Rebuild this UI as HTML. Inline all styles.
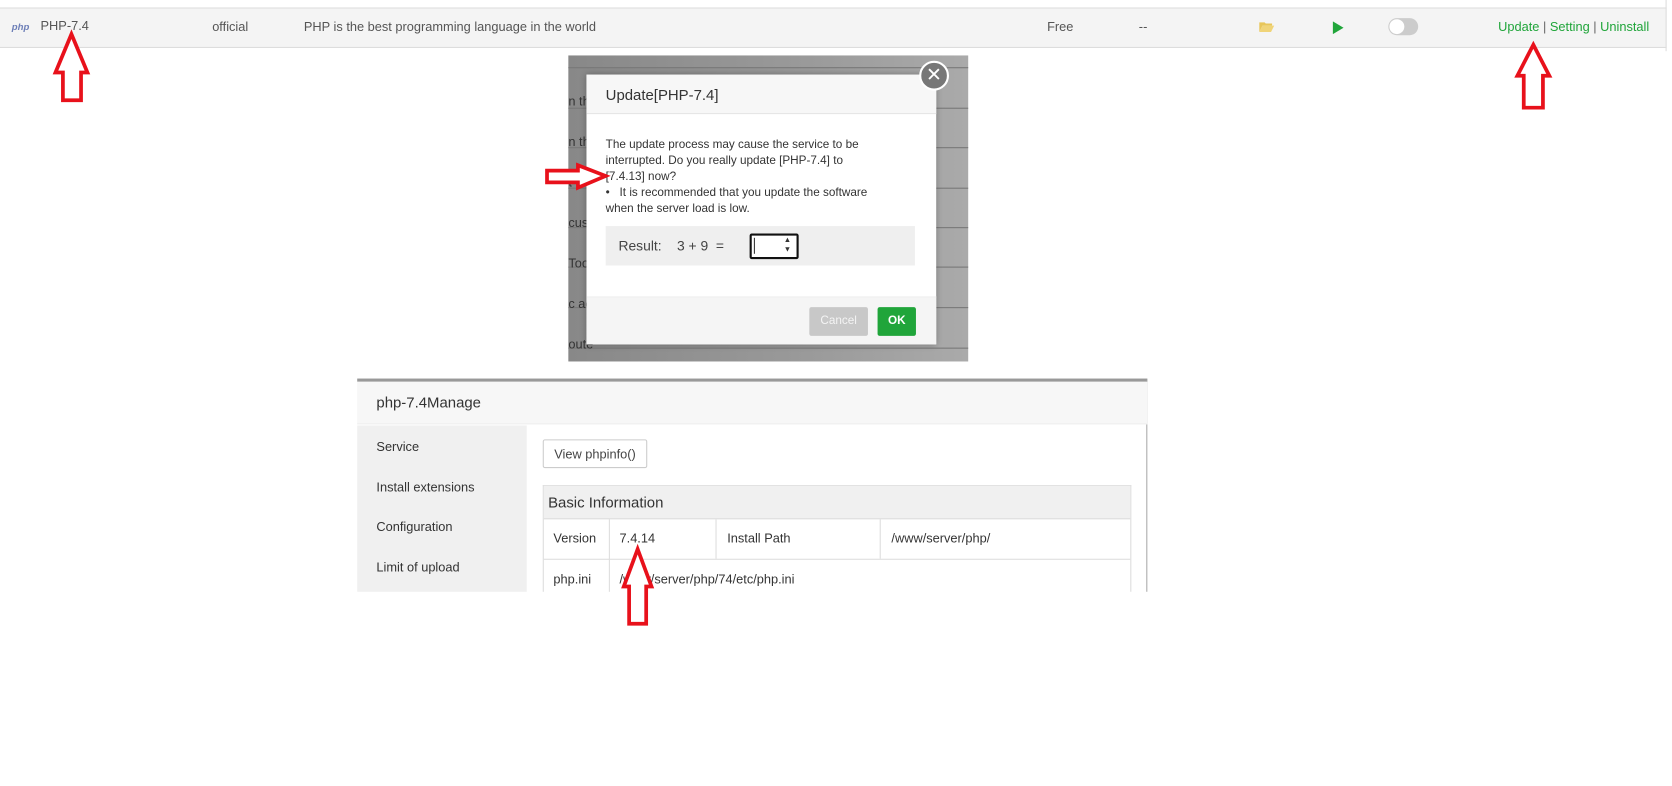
<!DOCTYPE html>
<html><head><meta charset="utf-8"><style>
*{margin:0;padding:0;box-sizing:border-box}
body{width:1672px;height:786px;background:#fff;position:relative;overflow:hidden;font-family:"Liberation Sans",sans-serif;color:#555;font-size:12px}
#w{position:absolute;left:0;top:0;width:1568px;height:737px;transform:scale(1.0663);transform-origin:0 0}
.a{position:absolute}
</style></head><body><div id="w">
<div class="a" style="left:0;top:7px;width:1563px;height:38px;background:#f4f4f4;border-top:1px solid #ddd;border-bottom:1px solid #ddd"></div>
<div class="a" style="left:1562px;top:0;width:1px;height:48px;background:#ddd"></div>
<div class="a" style="left:11px;top:20px;font-size:9px;font-style:italic;font-weight:bold;color:#6c7eb7">php</div>
<div class="a" style="left:38px;top:17px;font-size:12px">PHP-7.4</div>
<div class="a" style="left:199px;top:18px">official</div>
<div class="a" style="left:285px;top:18px">PHP is the best programming language in the world</div>
<div class="a" style="left:982px;top:18px">Free</div>
<div class="a" style="left:1068px;top:18px">--</div>
<svg class="a" style="left:1180px;top:19px" width="16" height="12"><path d="M1 2h5l1 1h6v2H4L1 11z" fill="#e8c65a"/><path d="M4 5h11l-3 6H1z" fill="#f0d478"/></svg>
<svg class="a" style="left:1249px;top:20px" width="12" height="12"><path d="M1 0L11 6L1 12z" fill="#20a53a"/></svg>
<div class="a" style="left:1302px;top:17px;width:28px;height:16px;border-radius:8px;background:#ccc"></div>
<div class="a" style="left:1303px;top:18px;width:14px;height:14px;border-radius:7px;background:#fff"></div>
<div class="a" style="left:1405px;top:18px;color:#20a53a">Update <span style="color:#666">|</span> Setting <span style="color:#666">|</span> Uninstall</div>

<div class="a" style="left:533px;top:52px;width:375px;height:287px;background:linear-gradient(90deg,#888,#9a9a9a 60%,#aaa)"></div>
<div class="a" style="left:533px;top:63px;width:375px;border-top:1px solid #777"></div>
<div class="a" style="left:533px;top:101px;width:375px;border-top:1px solid #777"></div>
<div class="a" style="left:533px;top:138px;width:375px;border-top:1px solid #777"></div>
<div class="a" style="left:533px;top:176px;width:375px;border-top:1px solid #777"></div>
<div class="a" style="left:533px;top:213px;width:375px;border-top:1px solid #777"></div>
<div class="a" style="left:533px;top:250px;width:375px;border-top:1px solid #777"></div>
<div class="a" style="left:533px;top:288px;width:375px;border-top:1px solid #777"></div>
<div class="a" style="left:533px;top:326px;width:375px;border-top:1px solid #777"></div>
<div class="a" style="left:533px;top:76px;color:#333;font-size:12px;line-height:38px">n th<br>n th<br>t<br>cuse<br>Too<br>c ac<br>oute</div>
<div class="a" style="left:550px;top:70px;width:328px;height:253px;background:#fff;box-shadow:0 0 6px rgba(0,0,0,.3)"></div>
<div class="a" style="left:550px;top:70px;width:328px;height:37px;background:#f7f7f7;border-bottom:1px solid #e6e6e6"></div>
<div class="a" style="left:568px;top:81px;font-size:14px;color:#333">Update[PHP-7.4]</div>
<div class="a" style="left:568px;top:129px;width:262px;font-size:11px;line-height:15px;color:#333">The update process may cause the service to be interrupted. Do you really update [PHP-7.4] to [7.4.13] now?<br>•&nbsp;&nbsp;&nbsp;It is recommended that you update the software when the server load is low.</div>
<div class="a" style="left:568px;top:212px;width:290px;height:37px;background:#efefef"></div>
<div class="a" style="left:580px;top:223px;font-size:13px;color:#444">Result:&nbsp;&nbsp;&nbsp; 3 + 9 &nbsp;=</div>
<div class="a" style="left:703px;top:219px;width:46px;height:24px;border:2px solid #111;border-radius:2px;background:#fff"></div>
<div class="a" style="left:707px;top:223px;width:1px;height:15px;background:#333"></div>
<div class="a" style="left:735px;top:221px;font-size:7px;line-height:9px;color:#333">▲<br>▼</div>
<div class="a" style="left:550px;top:278px;width:328px;height:45px;background:#f5f5f5;border-top:1px solid #eee"></div>
<div class="a" style="left:759px;top:288px;width:55px;height:27px;background:#c8c8c8;border-radius:2px;color:#f4f4f4;text-align:center;line-height:27px;font-size:11px">Cancel</div>
<div class="a" style="left:823px;top:288px;width:36px;height:27px;background:#20a53a;border-radius:2px;color:#fff;text-align:center;line-height:27px;font-size:11px;font-weight:bold">OK</div>
<div class="a" style="left:862px;top:57px;width:28px;height:28px;border-radius:14px;background:#777;border:2px solid #fff;color:#fff;text-align:center;line-height:23px;font-size:18px">✕</div>

<div class="a" style="left:335px;top:355px;width:741px;height:200px;background:#fff;border-top:3px solid #999;border-right:1px solid #aaa"></div>
<div class="a" style="left:335px;top:358px;width:741px;height:40px;background:#f7f7f7;border-bottom:1px solid #eee"></div>
<div class="a" style="left:353px;top:369px;font-size:14px;color:#333">php-7.4Manage</div>
<div class="a" style="left:335px;top:399px;width:159px;height:156px;background:#f0f0f0"></div>
<div class="a" style="left:353px;top:410px;font-size:12px;color:#333;line-height:37.5px;margin-top:-9px">Service<br>Install extensions<br>Configuration<br>Limit of upload</div>
<div class="a" style="left:509px;top:412px;width:98px;height:27px;border:1px solid #ccc;border-radius:2px;text-align:center;line-height:26px;color:#444">View phpinfo()</div>
<div class="a" style="left:509px;top:455px;width:552px;height:100px;border:1px solid #ddd;border-bottom:none"></div>
<div class="a" style="left:510px;top:456px;width:550px;height:31px;background:#f0f0f0;border-bottom:1px solid #ddd"></div>
<div class="a" style="left:514px;top:463px;font-size:14px;color:#333">Basic Information</div>
<div class="a" style="left:510px;top:524px;width:550px;border-top:1px solid #ddd"></div>
<div class="a" style="left:571px;top:487px;height:68px;border-left:1px solid #ddd"></div>
<div class="a" style="left:671px;top:487px;height:37px;border-left:1px solid #ddd"></div>
<div class="a" style="left:825px;top:487px;height:37px;border-left:1px solid #ddd"></div>
<div class="a" style="left:519px;top:498px;color:#333">Version</div>
<div class="a" style="left:581px;top:498px;color:#333">7.4.14</div>
<div class="a" style="left:682px;top:498px;color:#333">Install Path</div>
<div class="a" style="left:836px;top:498px;color:#333">/www/server/php/</div>
<div class="a" style="left:519px;top:536px;color:#333">php.ini</div>
<div class="a" style="left:581px;top:536px;color:#333">/www/server/php/74/etc/php.ini</div>

<svg class="a" style="left:0;top:0" width="1568" height="737">
<g fill="#fff" stroke="#e8111b" stroke-width="3.5">
<path d="M67 32L82 68H76V94H59V68H52Z"/>
<path d="M1438 42L1453 71H1447V101H1429V71H1423Z"/>
<path d="M598 515L611 550H606V585H590V550H585Z"/>
<path d="M568 165L542 155V160H513V171H542V176Z"/>
</g></svg>
</div></body></html>
